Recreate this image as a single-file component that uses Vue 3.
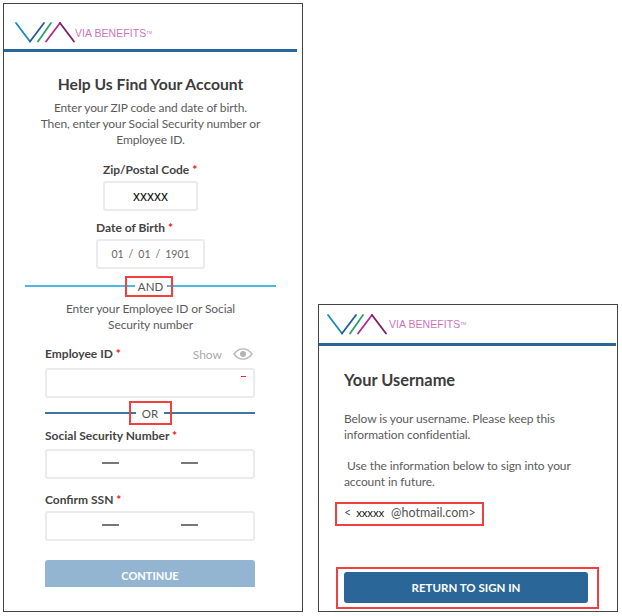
<script setup>
const maskedInputs = ['Social Security Number', 'Confirm SSN']
</script>

<template>
  <main class="page">
    <section class="panel find">
      <header class="brand brand-find">
        <svg class="logo" width="150" height="24" viewBox="0 0 150 24" fill="none" stroke-width="1.8" stroke-linecap="round" stroke-linejoin="round">
          <path d="M1 2 15 20.5" stroke="#1b8ab6" />
          <path d="M15 20.5 29 2" stroke="#1f5f8f" />
          <path d="M23 20.5 36 2" stroke="#2aa070" />
          <path d="M31 20.5 45 2" stroke="#b52a8e" />
          <path d="M45 2 59 20.5" stroke="#7d1d62" />
          <text x="60" y="16" class="logo-text">VIA BENEFITS<tspan class="tm" dy="-3">TM</tspan></text>
        </svg>
      </header>
      <div class="rule"></div>

      <h1 class="title-center">Help Us Find Your Account</h1>
      <p class="copy center intro">Enter your ZIP code and date of birth.<br />Then, enter your Social Security number or<br />Employee ID.</p>

      <div class="field-center zip">
        <label>Zip/Postal Code <b>*</b></label>
        <div class="input zip-input">xxxxx</div>
      </div>
      <div class="field-center dob">
        <label>Date of Birth <b>*</b></label>
        <div class="input dob-input"><span>01</span><span>/</span><span>01</span><span>/</span><span>1901</span></div>
      </div>

      <div class="sep and">
        <i></i>
        <span class="sep-label">AND<em class="mark"></em></span>
        <i></i>
      </div>
      <p class="copy center second">Enter your Employee ID or Social<br />Security number</p>

      <div class="form">
        <div class="label-row">
          <label>Employee ID <b>*</b></label>
          <span class="show">Show
            <svg width="20" height="12" viewBox="0 0 20 12" fill="none" stroke="#b5b5b5" stroke-width="1.3">
              <path d="M1 6C4 2 7 .8 10 .8S16 2 19 6C16 10 13 11.2 10 11.2S4 10 1 6Z" />
              <circle cx="10" cy="6" r="3" fill="#b5b5b5" stroke="none" />
            </svg>
          </span>
        </div>
        <div class="input wide"><span class="err"></span></div>

        <div class="sep or">
          <i></i>
          <span class="sep-label">OR<em class="mark"></em></span>
          <i></i>
        </div>

        <template v-for="(name, n) in maskedInputs" :key="name">
          <label :class="n ? 'confirm-label' : 'ssn-label'">{{ name }} <b>*</b></label>
          <div class="input wide masked"><span></span><span></span></div>
        </template>

        <div class="continue">CONTINUE</div>
      </div>
    </section>

    <section class="panel user">
      <header class="brand brand-user">
        <svg class="logo" width="150" height="24" viewBox="0 0 150 24" fill="none" stroke-width="1.8" stroke-linecap="round" stroke-linejoin="round">
          <path d="M1 2 15 20.5" stroke="#1b8ab6" />
          <path d="M15 20.5 29 2" stroke="#1f5f8f" />
          <path d="M23 20.5 36 2" stroke="#2aa070" />
          <path d="M31 20.5 45 2" stroke="#b52a8e" />
          <path d="M45 2 59 20.5" stroke="#7d1d62" />
          <text x="62" y="15" class="logo-text">VIA BENEFITS<tspan class="tm" dy="-3">TM</tspan></text>
        </svg>
      </header>
      <div class="rule rule-user"></div>
      <div class="user-body">
        <h2>Your Username</h2>
        <p class="copy">Below is your username. Please keep this<br />information confidential.</p>
        <p class="copy use">&nbsp;Use the information below to sign into your<br />account in future.</p>
        <p class="username"><span>&lt;</span><span class="redacted">xxxxx</span><span>@hotmail.com&gt;</span><em class="mark"></em></p>
        <div class="return">RETURN TO SIGN IN<em class="mark"></em></div>
      </div>
    </section>
  </main>
</template>

<style scoped>
.page {
  width: 622px;
  height: 616px;
  padding: 3px 0 0 3px;
  box-sizing: border-box;
  display: flex;
  gap: 15px;
  background: #fff;
  font-family: Lato, "Noto Sans", sans-serif;
  color: #555;
  overflow: hidden;
}
.panel {
  box-sizing: border-box;
  width: 300px;
  border: 1px solid #444;
  background: #fff;
}
.find { height: 609px; padding-right: 5px; }
.user { height: 308px; margin-top: 301px; }
.brand { display: flex; }
.brand-find { padding: 17px 0 0 11px; height: 28px; }
.brand-user { padding: 8px 0 0 8px; height: 30px; }
.logo { display: block; overflow: visible; }
.logo-text { fill: #d173ba; stroke: none; font-family: "Liberation Sans", sans-serif; font-size: 10.5px; letter-spacing: .05px; }
.tm { font-size: 4px; }
.rule { height: 3px; background: #2a6698; }
.rule-user { margin-right: 1px; }
h1, h2, p { margin: 0; }
h1 { font-size: 15.7px; line-height: 20px; font-weight: 700; color: #3d3d3d; }
.title-center { text-align: center; margin-top: 22px; }
.copy { font-size: 12px; line-height: 16px; color: #5c5c5c; letter-spacing: -.1px; }
.center { text-align: center; }
.intro { margin-top: 6px; }
label { font-size: 12px; line-height: 16px; font-weight: 700; color: #444; display: block; white-space: nowrap; }
label b { color: #f01c1c; }
.field-center { width: fit-content; margin-left: auto; margin-right: auto; }
.zip { margin-top: 14px; }
.dob { margin-top: 9px; }
.field-center .input { margin-top: 3px; }
.input { box-sizing: border-box; border: 2px solid #ebebeb; border-radius: 3px; background: #fff; }
.zip-input {
  width: 95px; height: 30px;
  display: flex; align-items: center; justify-content: center;
  color: #111; font: 14px "Liberation Sans", sans-serif;
}
.dob-input {
  width: 109px; height: 30px;
  display: flex; align-items: center; justify-content: center; gap: 5px;
  font-size: 10.5px; color: #666;
}
.sep { display: flex; align-items: center; }
.sep i { flex: 1; height: 2px; }
.and { margin: 7px 21px 0 21px; height: 20px; }
.and i { background: #4db8e0; }
.or { margin-top: 3px; height: 24px; }
.or i { background: #3f75a3; }
.sep-label { position: relative; display: block; text-align: center; font-size: 11.5px; color: #555; }
.and .sep-label { width: 32px; }
.or .sep-label { width: 28px; }
.mark { position: absolute; border: 2px solid #f04040; box-sizing: border-box; pointer-events: none; }
.and .mark { left: -10px; top: -4px; width: 48px; height: 21px; }
.or .mark { left: -7px; top: -6px; width: 43px; height: 24px; }
.second { margin-top: 5px; }
.form { margin: 0 42px 0 41px; }
.label-row { display: flex; justify-content: space-between; align-items: center; margin-top: 13px; }
.show { display: flex; align-items: center; gap: 11px; font-size: 12px; color: #aaa; margin-right: 2px; }
.wide { height: 30px; width: 100%; position: relative; }
.label-row + .wide { margin-top: 6px; }
.err { position: absolute; right: 7px; top: 6px; width: 5px; height: 1px; background: #ff2020; }
.ssn-label { margin-top: 3px; }
.ssn-label + .wide { margin-top: 5px; }
.confirm-label { margin-top: 13px; }
.confirm-label + .wide { margin-top: 3px; }
.masked { display: flex; justify-content: center; gap: 62px; padding-top: 11px; }
.masked span { width: 17px; height: 2px; background: #777; }
.continue {
  margin-top: 19px; height: 27px; padding-top: 3px; box-sizing: border-box;
  background: #94b5d1; border-radius: 3px 3px 0 0;
  color: #fff; font-size: 11px; font-weight: 700;
  display: flex; align-items: center; justify-content: center;
}
.user-body { padding: 0 25px; position: relative; }
h2 { font-size: 16.4px; line-height: 20px; font-weight: 700; color: #3d3d3d; margin-top: 24px; }
.user-body .copy { line-height: 16px; }
.user-body h2 + .copy { margin-top: 21px; }
.use { margin-top: 15px; }
.username { position: relative; margin-top: 15px; display: flex; align-items: center; font-size: 12.5px; line-height: 16px; color: #555; }
.redacted { margin: 0 7px 0 5px; color: #111; font: 11.5px "Liberation Sans", sans-serif; letter-spacing: -.2px; }
.username .mark { left: -9px; top: -3px; width: 149px; height: 24px; }
.return {
  position: relative;
  margin: 51px 4px 0 0; height: 31px;
  background: #2a6698; border-radius: 3px;
  color: #fff; font-size: 11.5px; font-weight: 700;
  display: flex; align-items: center; justify-content: center;
}
.return .mark { left: -8px; top: -5px; width: 263px; height: 42px; }
</style>
